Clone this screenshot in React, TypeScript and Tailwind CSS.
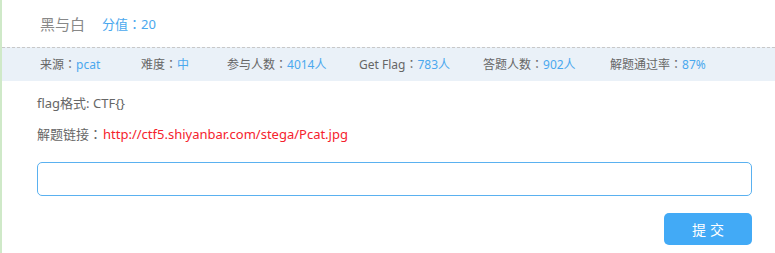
const Colon = () => (
  <span style={{ fontFamily: '"Noto Sans CJK TC", sans-serif' }}>：</span>
);

export default function App() {
  const stats = [
    { label: "来源", value: "pcat", w: "w-[101px]", gap: "mr-[4px]" },
    { label: "难度", value: "中", w: "w-[86px]", gap: "" },
    { label: "参与人数", value: "4014人", w: "w-[132px]", gap: "" },
    { label: "Get Flag", value: "783人", w: "w-[124px]", gap: "" },
    { label: "答题人数", value: "902人", w: "w-[127px]", gap: "" },
    { label: "解题通过率", value: "87%", w: "", gap: "" },
  ];

  return (
    <div
      className="w-[775px] h-[253px] bg-white border-l-2 border-[#cfe9c8] overflow-hidden"
      style={{ fontFamily: '"Noto Sans", "Noto Sans CJK SC", sans-serif' }}
    >
      {/* header */}
      <div className="h-[47px] flex items-center pl-[38px] pt-[2px]">
        <span className="text-[15px] text-[#888]">黑与白</span>
        <span className="ml-[17px] text-[13px] text-[#4aa8ee]">
          分值<Colon />20
        </span>
      </div>

      {/* stats bar */}
      <div className="h-[34px] bg-[#eaf1f8] border-t border-dashed border-[#c8c8c8] flex items-center pl-[38px] text-[12px]">
        {stats.map((s, i) => (
          <div key={i} className={`${s.w} shrink-0 whitespace-nowrap`}>
            <span className="text-[#666]">
              {s.label}
              <Colon />
            </span>
            <span className={`text-[#4aa8ee] ${s.gap}`}>{s.value}</span>
          </div>
        ))}
      </div>

      {/* body */}
      <div className="pl-[35px] pr-[23px] text-[13px] text-[#666]">
        <div className="mt-[13px] h-[18px] leading-[18px]">flag格式: CTF{"{}"}</div>
        <div className="mt-[13px] h-[18px] leading-[18px]">
          解题链接<Colon />
          <span className="ml-[1px] text-[#f5222d]">http://ctf5.shiyanbar.com/stega/Pcat.jpg</span>
        </div>
        <input
          className="mt-[19px] block w-full h-[34px] rounded-[5px] border border-[#5ab1f0] outline-none px-2"
          type="text"
        />
        <div className="flex justify-end mt-[17px]">
          <button className="w-[88px] h-[32px] rounded-[5px] bg-[#42aaf6] text-white text-[14px] tracking-[4px] pl-[4px]">
            提交
          </button>
        </div>
      </div>
    </div>
  );
}
